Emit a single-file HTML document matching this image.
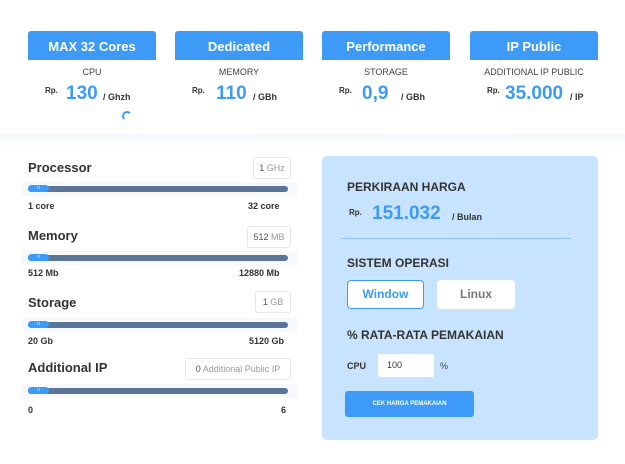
<!DOCTYPE html><html><head><style>
*{margin:0;padding:0;box-sizing:border-box}
body{width:625px;height:464px;background:#fff;font-family:"Liberation Sans",sans-serif;position:relative;overflow:hidden;color:#333}
.a{position:absolute}
.hd{position:absolute;top:31px;height:29px;width:128px;background:#3d9bf7;color:#fff;font-weight:bold;font-size:13px;text-align:center;line-height:31px;border-radius:3px 3px 0 0}
.sub{position:absolute;top:67px;width:128px;text-align:center;font-size:9px;color:#444}
.rp{position:absolute;font-size:8px;font-weight:bold;color:#333}
.big{position:absolute;font-size:19px;font-weight:bold;color:#3d9bf7}
.un{position:absolute;font-size:9px;font-weight:bold;color:#333}
.lab{position:absolute;left:28px;font-size:13px;font-weight:bold;color:#333}
.box{position:absolute;height:22px;border:1px solid #e6e6e6;border-radius:3px;font-size:9px;color:#555;text-align:center;line-height:20px;background:#fff}
.box span{color:#999}
.band{position:absolute;left:22px;width:275px;height:14px;background:#f6f8fa}
.tr{position:absolute;left:28px;width:260px;height:6px;background:#5b7597;border-radius:3px}
.th{position:absolute;left:28px;width:21px;height:7px;background:#3d9bf7;border-radius:4px;color:#fff;font-size:5px;text-align:center;line-height:7px}
.mm{position:absolute;font-size:9px;font-weight:bold;color:#333}
</style></head><body>
<div class="a" style="left:0;top:134px;width:625px;height:14px;background:linear-gradient(#f3f7fb,#fff)"></div>
<div class="hd" style="left:28px">MAX 32 Cores</div>
<div class="hd" style="left:175px">Dedicated</div>
<div class="hd" style="left:322px">Performance</div>
<div class="hd" style="left:470px">IP Public</div>
<div class="sub" style="left:28px">CPU</div>
<div class="sub" style="left:175px">MEMORY</div>
<div class="sub" style="left:322px">STORAGE</div>
<div class="sub" style="left:470px">ADDITIONAL IP PUBLIC</div>
<div class="rp" style="left:45px;top:86px">Rp.</div><div class="big" style="left:66px;top:83px">130</div><div class="un" style="left:103px;top:92px">/ Ghzh</div>
<div class="rp" style="left:192px;top:86px">Rp.</div><div class="big" style="left:216px;top:83px">110</div><div class="un" style="left:253px;top:92px">/ GBh</div>
<div class="rp" style="left:339px;top:86px">Rp.</div><div class="big" style="left:362px;top:83px">0,9</div><div class="un" style="left:401px;top:92px">/ GBh</div>
<div class="rp" style="left:487px;top:86px">Rp.</div><div class="big" style="left:505px;top:83px">35.000</div><div class="un" style="left:570px;top:92px">/ IP</div>
<div class="a" style="left:122px;top:111px;width:10px;height:10px;border:2px solid #3d9bf7;border-color:#3d9bf7 transparent transparent #3d9bf7;border-radius:50%"></div>

<div class="lab" style="top:160px">Processor</div>
<div class="box" style="left:253px;top:157px;width:38px">1 <span>GHz</span></div>
<div class="band" style="top:182px"></div><div class="tr" style="top:186px"></div><div class="th" style="top:185px">ıı</div>
<div class="mm" style="left:28px;top:201px">1 core</div><div class="mm" style="left:248px;top:201px">32 core</div>

<div class="lab" style="top:228px">Memory</div>
<div class="box" style="left:247px;top:226px;width:44px">512 <span>MB</span></div>
<div class="band" style="top:251px"></div><div class="tr" style="top:255px"></div><div class="th" style="top:254px">ıı</div>
<div class="mm" style="left:28px;top:268px">512 Mb</div><div class="mm" style="left:239px;top:268px">12880 Mb</div>

<div class="lab" style="top:295px">Storage</div>
<div class="box" style="left:255px;top:291px;width:36px">1 <span>GB</span></div>
<div class="band" style="top:318px"></div><div class="tr" style="top:322px"></div><div class="th" style="top:321px">ıı</div>
<div class="mm" style="left:28px;top:336px">20 Gb</div><div class="mm" style="left:249px;top:336px">5120 Gb</div>

<div class="lab" style="top:360px">Additional IP</div>
<div class="box" style="left:185px;top:358px;width:106px">0 <span>Additional Public IP</span></div>
<div class="band" style="top:384px"></div><div class="tr" style="top:388px"></div><div class="th" style="top:387px">ıı</div>
<div class="mm" style="left:28px;top:405px">0</div><div class="mm" style="left:281px;top:405px">6</div>

<div class="a" style="left:322px;top:156px;width:276px;height:284px;background:#c7e3fd;border-radius:5px"></div>
<div class="a" style="left:347px;top:180px;font-size:12px;font-weight:bold;color:#333">PERKIRAAN HARGA</div>
<div class="rp" style="left:349px;top:208px">Rp.</div>
<div class="big" style="left:372px;top:203px">151.032</div>
<div class="un" style="left:452px;top:212px">/ Bulan</div>
<div class="a" style="left:341px;top:238px;width:230px;height:1px;background:#8fc3f5"></div>
<div class="a" style="left:347px;top:256px;font-size:12px;font-weight:bold;color:#333">SISTEM OPERASI</div>
<div class="a" style="left:347px;top:280px;width:77px;height:29px;background:#fff;border:1px solid #3d9bf7;border-radius:4px;color:#3d9bf7;font-weight:bold;font-size:12px;text-align:center;line-height:27px">Window</div>
<div class="a" style="left:437px;top:280px;width:78px;height:29px;background:#fff;border-radius:4px;color:#777;font-weight:bold;font-size:12px;text-align:center;line-height:29px">Linux</div>
<div class="a" style="left:347px;top:328px;font-size:12px;font-weight:bold;color:#333">% RATA-RATA PEMAKAIAN</div>
<div class="a" style="left:347px;top:361px;font-size:9px;font-weight:bold;color:#333">CPU</div>
<div class="a" style="left:378px;top:354px;width:56px;height:23px;background:#fff;border-radius:2px;font-size:9px;line-height:23px;padding-left:9px;color:#333">100</div>
<div class="a" style="left:440px;top:361px;font-size:9px;color:#444">%</div>
<div class="a" style="left:345px;top:391px;width:129px;height:26px;background:#3d9bf7;border-radius:3px;color:#fff;font-size:6px;font-weight:bold;text-align:center;line-height:26px">CEK HARGA PEMAKAIAN</div>
</body></html>
